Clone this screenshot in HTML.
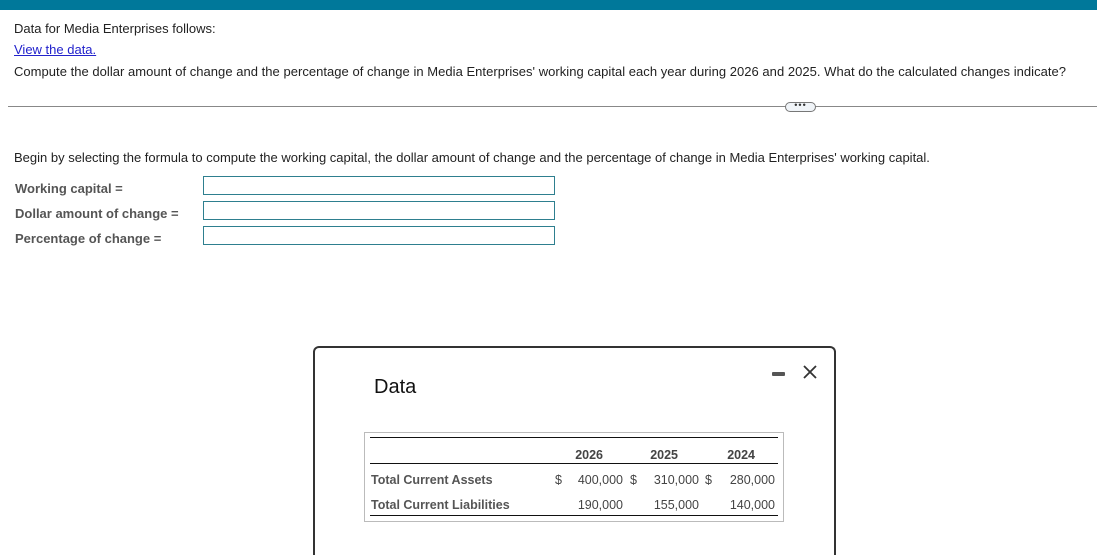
<!DOCTYPE html>
<html><head><style>
html,body{margin:0;width:1097px;height:555px;overflow:hidden}
body{background:#fff;font-family:"Liberation Sans",Arial,sans-serif;position:relative;color:#222}
.a{position:absolute;white-space:nowrap}
.t{font-size:13px}
.lb{font-size:13px;font-weight:bold;color:#555}
.in{position:absolute;left:203px;width:350px;height:17px;border:1px solid #2e7f8f}
.n{position:absolute;font-size:12.5px;color:#444;text-align:right}
.h{font-weight:bold}
</style></head><body>
<div class="a" style="left:0;top:0;width:1097px;height:10px;background:#00789a"></div>
<div class="a t" style="left:14px;top:21px">Data for Media Enterprises follows:</div>
<div class="a t" style="left:14px;top:42px;color:#2222cc;text-decoration:underline">View the data.</div>
<div class="a t" style="left:14px;top:64px;letter-spacing:0.03px">Compute the dollar amount of change and the percentage of change in Media Enterprises' working capital each year during 2026 and 2025. What do the calculated changes indicate?</div>
<div class="a" style="left:8px;top:106px;width:1089px;height:1px;background:#888"></div>
<div class="a" style="left:785px;top:102px;width:29px;height:8px;border:1px solid #777;border-radius:5px;background:#f0f4f8;font-size:9px;line-height:5px;text-align:center;color:#333;letter-spacing:1px">•••</div>
<div class="a t" style="left:14px;top:150px">Begin by selecting the formula to compute the working capital, the dollar amount of change and the percentage of change in Media Enterprises' working capital.</div>
<div class="a lb" style="left:15px;top:181px">Working capital =</div>
<div class="a lb" style="left:15px;top:206px">Dollar amount of change =</div>
<div class="a lb" style="left:15px;top:231px">Percentage of change =</div>
<div class="in" style="top:176px"></div>
<div class="in" style="top:201px"></div>
<div class="in" style="top:226px"></div>
<div class="a" style="left:313px;top:346px;width:519px;height:220px;border:2px solid #333;border-bottom:none;border-radius:6px 6px 0 0"></div>
<div class="a" style="left:374px;top:376px;font-size:20px;color:#111">Data</div>
<div class="a" style="left:772px;top:372px;width:13px;height:4px;background:#555;border-radius:1px"></div>
<svg class="a" style="left:802px;top:364px" width="16" height="16"><path d="M2 2L14 14M14 2L2 14" stroke="#333" stroke-width="1.8"/></svg>
<div class="a" style="left:364px;top:432px;width:418px;height:88px;border:1px solid #bbb"></div>
<div class="a" style="left:370px;top:437px;width:408px;height:1px;background:#111"></div>
<div class="a" style="left:370px;top:463px;width:408px;height:1px;background:#111"></div>
<div class="a" style="left:370px;top:515px;width:408px;height:1px;background:#111"></div>
<div class="n h" style="left:560px;width:43px;top:448px">2026</div>
<div class="n h" style="left:634px;width:44px;top:448px">2025</div>
<div class="n h" style="left:710px;width:45px;top:448px">2024</div>
<div class="a lb" style="left:371px;top:473px;font-size:12.5px">Total Current Assets</div>
<div class="a lb" style="left:371px;top:498px;font-size:12.5px">Total Current Liabilities</div>
<div class="n" style="left:555px;top:473px">$</div>
<div class="n" style="left:560px;width:63px;top:473px">400,000</div>
<div class="n" style="left:630px;top:473px">$</div>
<div class="n" style="left:636px;width:63px;top:473px">310,000</div>
<div class="n" style="left:705px;top:473px">$</div>
<div class="n" style="left:712px;width:63px;top:473px">280,000</div>
<div class="n" style="left:560px;width:63px;top:498px">190,000</div>
<div class="n" style="left:636px;width:63px;top:498px">155,000</div>
<div class="n" style="left:712px;width:63px;top:498px">140,000</div>
</body></html>
